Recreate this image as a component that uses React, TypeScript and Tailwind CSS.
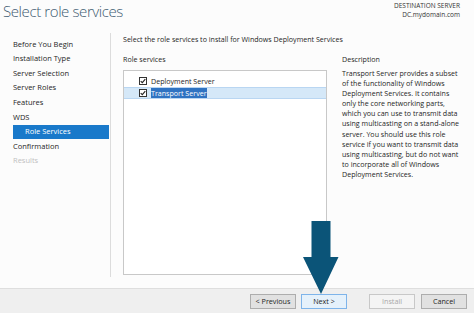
import React from "react";

const navItems = [
  { label: "Before You Begin" },
  { label: "Installation Type" },
  { label: "Server Selection" },
  { label: "Server Roles" },
  { label: "Features" },
  { label: "WDS" },
  { label: "Role Services", active: true, sub: true },
  { label: "Confirmation" },
  { label: "Results", disabled: true },
];

const descLines = [
  "Transport Server provides a subset",
  "of the functionality of Windows",
  "Deployment Services. It contains",
  "only the core networking parts,",
  "which you can use to transmit data",
  "using multicasting on a stand-alone",
  "server. You should use this role",
  "service if you want to transmit data",
  "using multicasting, but do not want",
  "to incorporate all of Windows",
  "Deployment Services.",
];

function Check() {
  return (
    <span className="w-[8px] h-[8px] border border-[#333] bg-white flex items-center justify-center shrink-0">
      <svg width="6" height="6" viewBox="0 0 6 6">
        <path d="M0.7 3.1 L2.3 4.7 L5.3 1.2" stroke="#222" strokeWidth="1.1" fill="none" />
      </svg>
    </span>
  );
}

function Button({ label, primary, disabled }: { label: string; primary?: boolean; disabled?: boolean }) {
  const cls = disabled
    ? "bg-[#f4f4f4] border-[#c8c8c8] text-[#a8a8a8]"
    : primary
    ? "bg-[#e5f1fb] border-[#7eb4ea] text-[#1e1e1e]"
    : "bg-[#e1e1e1] border-[#adadad] text-[#1e1e1e]";
  return (
    <div className={`w-[46px] h-[15px] border flex items-center justify-center text-[7.2px] ${cls}`}>
      {label}
    </div>
  );
}

export default function App() {
  return (
    <div
      className="relative w-[474px] h-[313px] overflow-hidden bg-[#fcfcfc] flex flex-col text-[#1e1e1e]"
      style={{ fontFamily: '"Open Sans", "Noto Sans", sans-serif' }}
    >
      {/* Header */}
      <div className="h-[33px] flex justify-between shrink-0">
        <div className="pl-[3px] text-[15px] tracking-[-0.4px] font-light leading-[22px] text-[#3d5a70]">
          Select role services
        </div>
        <div className="pr-[14px] pt-[1px] text-right text-[6.5px] leading-[9px] text-[#333]">
          <div>DESTINATION SERVER</div>
          <div>DC.mydomain.com</div>
        </div>
      </div>

      {/* Body */}
      <div className="flex flex-1 min-h-0">
        {/* Left navigation */}
        <div className="w-[111px] border-r border-[#dcdcdc] pt-[4px] pl-[13px] pr-[1px] mb-[11px] shrink-0">
          {navItems.map((item) => (
            <div
              key={item.label}
              className={`h-[14.6px] flex items-center text-[7.5px] ${
                item.active ? "bg-[#1979ca] text-white pl-[12px]" : ""
              } ${item.disabled ? "text-[#c0c0c0]" : ""}`}
            >
              {item.label}
            </div>
          ))}
        </div>

        {/* Main */}
        <div className="flex-1 flex flex-col pl-[12px] pb-[13px]">
          <div className="text-[7.1px] leading-[12px] h-[12px]">
            Select the role services to install for Windows Deployment Services
          </div>
          <div className="flex flex-1 min-h-0 mt-[8px]">
            <div className="w-[204px] flex flex-col">
              <div className="text-[7.1px] leading-[12px] h-[17px]">Role services</div>
              <div className="flex-1 bg-white border border-[#c8c8c8] pt-[4px]">
                <div className="h-[12px] flex items-center pl-[15px] gap-[4px] text-[7.1px]">
                  <Check />
                  <span>Deployment Server</span>
                </div>
                <div className="h-[12px] flex items-center pl-[15px] gap-[4px] text-[7.1px] bg-[#d5e8f8] border-y border-[#b9d6f2]">
                  <Check />
                  <span className="bg-[#2f73c2] text-white leading-[10px]">Transport Server</span>
                </div>
              </div>
            </div>
            <div className="ml-[15px] flex flex-col">
              <div className="text-[7.1px] leading-[12px] h-[15px]">Description</div>
              <div className="text-[7.1px] leading-[10.1px]">
                {descLines.map((l) => (
                  <div key={l}>{l}</div>
                ))}
              </div>
            </div>
          </div>
        </div>
      </div>

      {/* Footer */}
      <div className="h-[25px] shrink-0 bg-[#efefef] border-t border-[#dedede] flex justify-end items-start pt-[5px] pr-[7px]">
        <Button label="< Previous" />
        <div className="ml-[5px]">
          <Button label="Next >" primary />
        </div>
        <div className="ml-[22px]">
          <Button label="Install" disabled />
        </div>
        <div className="ml-[6px]">
          <Button label="Cancel" />
        </div>
      </div>

      {/* Overlay arrow */}
      <svg className="absolute left-0 top-0 pointer-events-none" width="474" height="313" viewBox="0 0 474 313">
        <path d="M311.5 221 H330.5 V257 H338.5 L321 294 L303 257 H311.5 Z" fill="#0b5478" />
      </svg>
    </div>
  );
}
